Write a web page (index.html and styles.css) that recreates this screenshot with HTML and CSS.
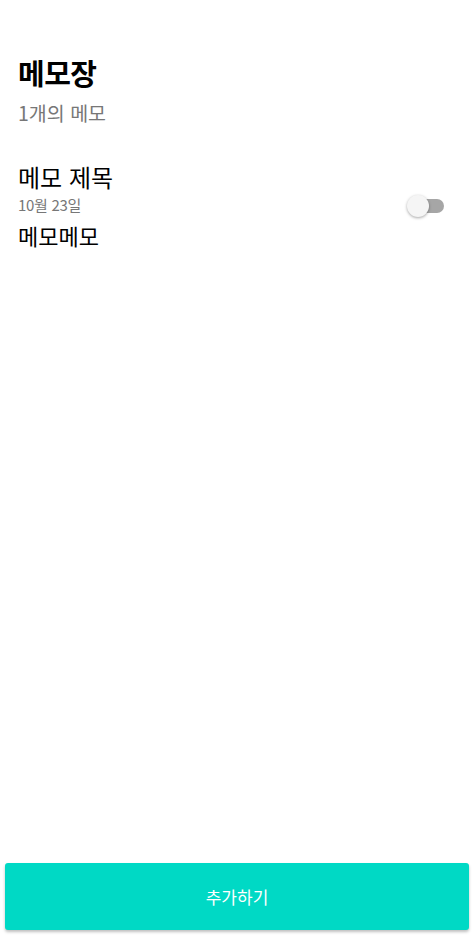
FILE: index.html
```html
<!DOCTYPE html>
<html lang="ko">
<head>
<meta charset="utf-8">
<link rel="stylesheet" href="styles.css">
</head>
<body>
<div class="app">
  <header class="header">
    <h1 class="title">메모장</h1>
    <div class="count">1개의 메모</div>
  </header>
  <main class="list">
    <div class="memo">
      <div class="memo-text">
        <div class="memo-title">메모 제목</div>
        <div class="memo-date">10월 23일</div>
        <div class="memo-body">메모메모</div>
      </div>
      <div class="switch"><span class="track"></span><span class="thumb"></span></div>
    </div>
  </main>
  <footer class="footer">
    <button class="add">추가하기</button>
  </footer>
</div>
</body>
</html>
```
FILE: styles.css
```css
* { box-sizing: border-box; }
html, body { margin: 0; padding: 0; background: #fff; }
body { font-family: "Noto Sans CJK KR", "Noto Sans", sans-serif; color: #000; }
.app { height: 937px; display: flex; flex-direction: column; }
.header { padding: 50px 18px 0; }
.title { margin: 0; font-size: 29px; font-weight: 700; line-height: 44px; letter-spacing: -0.5px; }
.count { margin-top: 5px; font-size: 19.5px; line-height: 28px; color: #777; }
.list { flex: 1; padding: 33px 18px 0; }
.memo { display: flex; align-items: center; justify-content: space-between; }
.memo-title { font-size: 24px; line-height: 34px; }
.memo-date { font-size: 15px; line-height: 20px; color: #777; margin-top: 1px; letter-spacing: -0.3px; }
.memo-body { font-size: 22px; line-height: 32px; margin-top: 4px; }
.switch { position: relative; width: 38px; height: 24px; margin-right: 12px; margin-top: 0; }
.track { position: absolute; left: 4px; right: 0; top: 5px; height: 14px; border-radius: 7px; background: #a6a6a6; }
.thumb { position: absolute; left: 1px; top: 1px; width: 22px; height: 22px; border-radius: 50%; background: #f5f5f5; box-shadow: 0 1px 3px rgba(0,0,0,0.35); }
.footer { padding: 0 5px 7px; }
.add { display: block; width: 100%; height: 67px; border: none; border-radius: 3px; background: #00d9c5; color: #fff; font-family: "Noto Sans CJK KR", "Noto Sans", sans-serif; font-size: 17px; box-shadow: 0 2px 3px rgba(0,0,0,0.25); padding: 0; }
```
